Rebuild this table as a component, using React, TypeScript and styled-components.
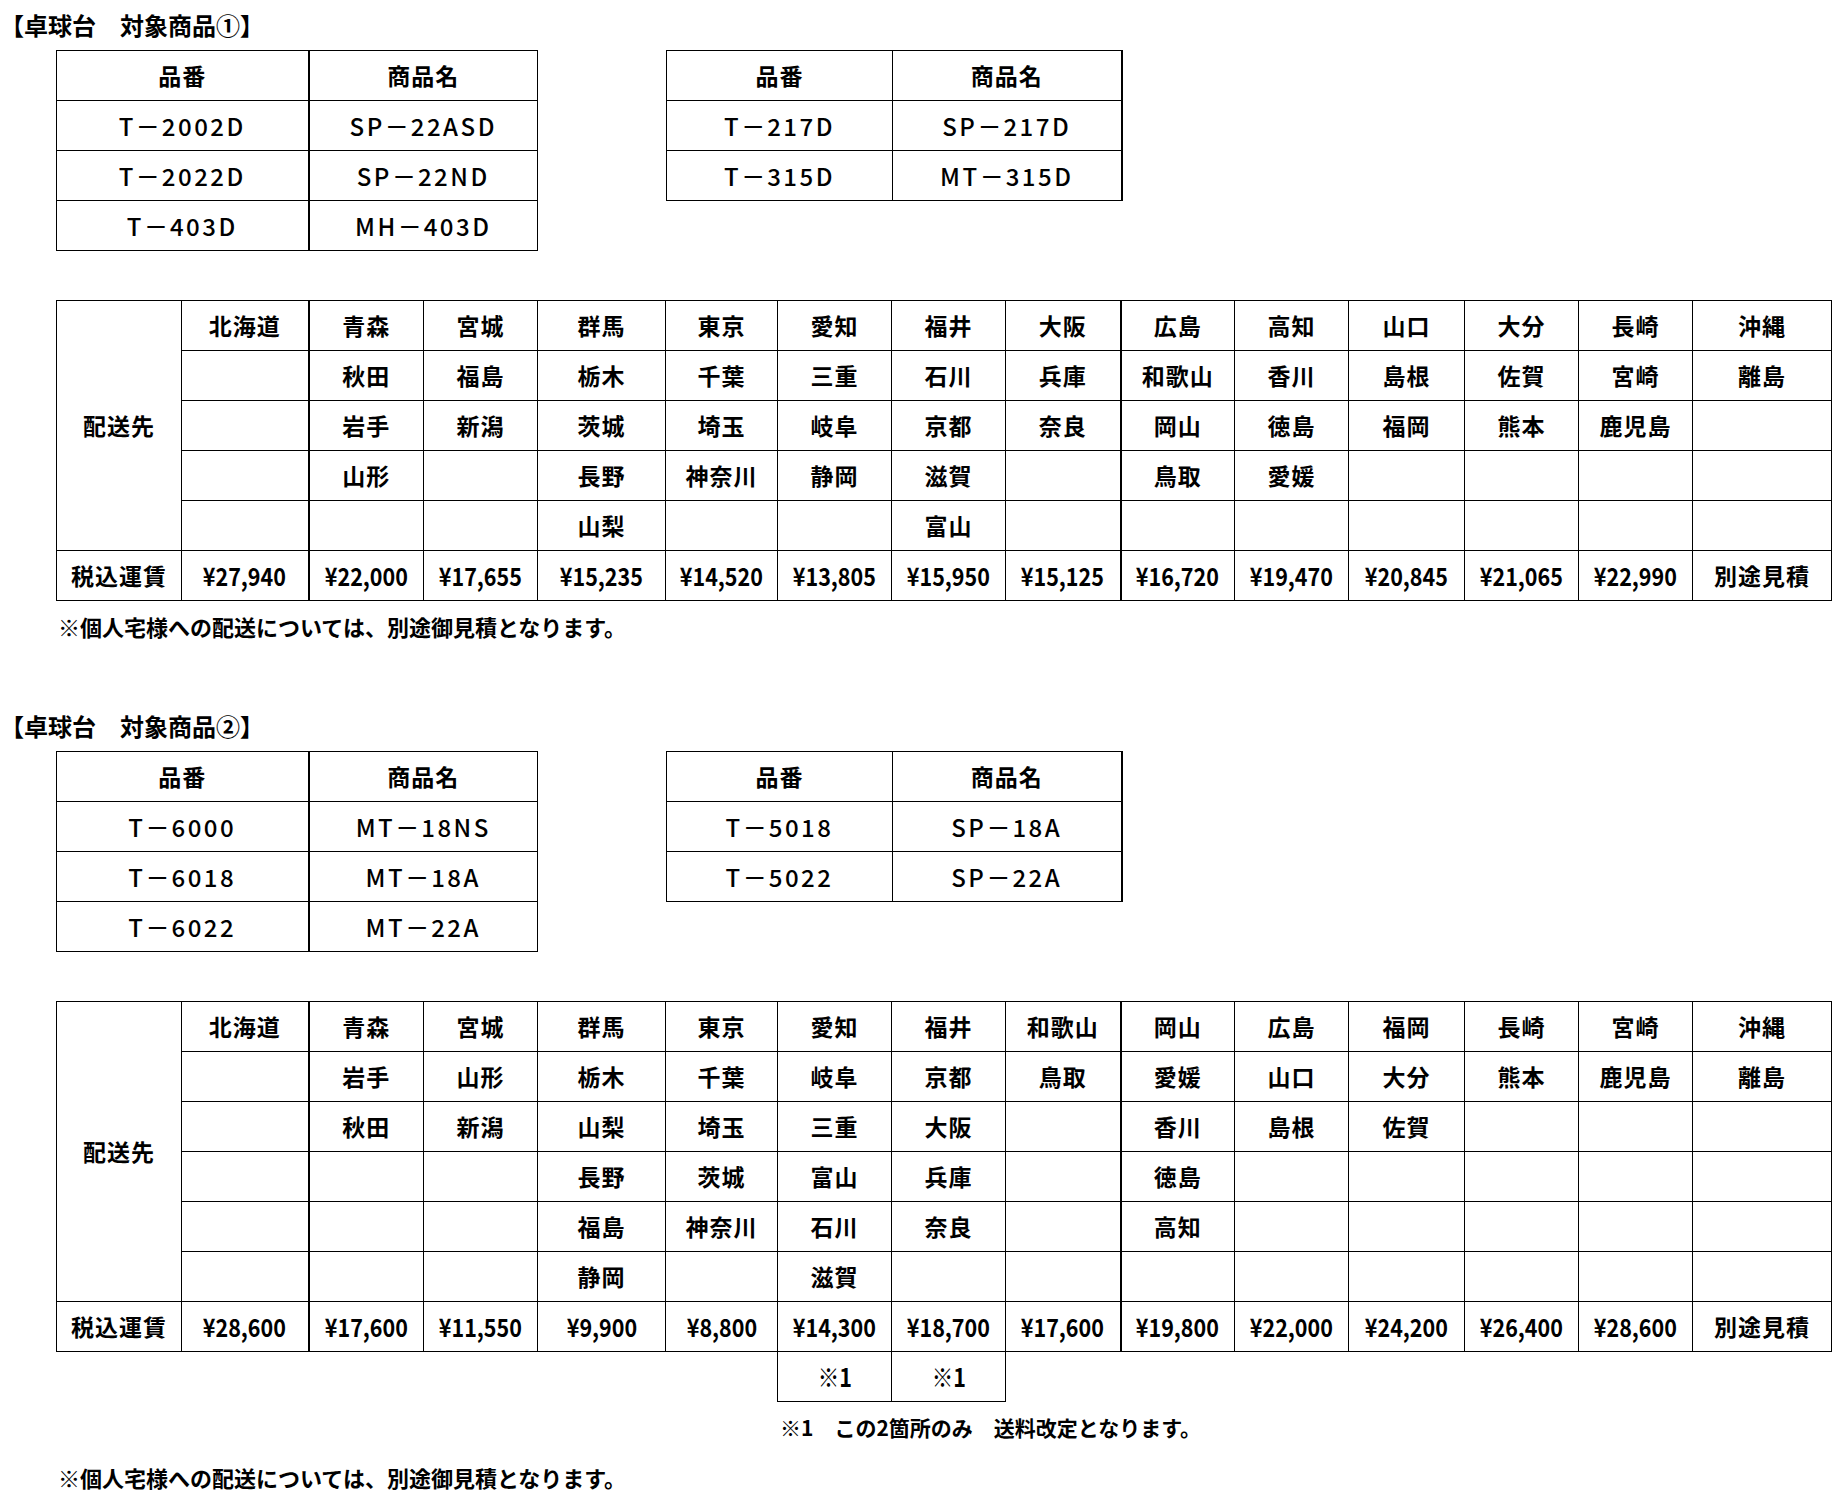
import React from 'react';
import styled, { createGlobalStyle } from 'styled-components';

const GlobalStyle = createGlobalStyle`
  html, body { margin: 0; padding: 0; background: #fff; }
  body {
    font-family: "Noto Sans CJK JP", "Noto Sans", sans-serif;
    color: #000;
  }
`;

const COLS = [125, 127, 115, 114, 128, 112, 114, 114, 115, 114, 114, 116, 114, 114, 139];
const THICK_AFTER = [1, 8];

type Section = {
  title: string;
  left: [string, string][];
  right: [string, string][];
  dest: string[][];
  fares: string[];
  footnoteCols?: number[];
  footnoteText?: string;
};

const SECTIONS: Section[] = [
  {
    title: '【卓球台　対象商品①】',
    left: [
      ['Ｔ－２００２Ｄ', 'ＳＰ－２２ＡＳＤ'],
      ['Ｔ－２０２２Ｄ', 'ＳＰ－２２ＮＤ'],
      ['Ｔ－４０３Ｄ', 'ＭＨ－４０３Ｄ'],
    ],
    right: [
      ['Ｔ－２１７Ｄ', 'ＳＰ－２１７Ｄ'],
      ['Ｔ－３１５Ｄ', 'ＭＴ－３１５Ｄ'],
    ],
    dest: [
      ['北海道'],
      ['青森', '秋田', '岩手', '山形'],
      ['宮城', '福島', '新潟'],
      ['群馬', '栃木', '茨城', '長野', '山梨'],
      ['東京', '千葉', '埼玉', '神奈川'],
      ['愛知', '三重', '岐阜', '静岡'],
      ['福井', '石川', '京都', '滋賀', '富山'],
      ['大阪', '兵庫', '奈良'],
      ['広島', '和歌山', '岡山', '鳥取'],
      ['高知', '香川', '徳島', '愛媛'],
      ['山口', '島根', '福岡'],
      ['大分', '佐賀', '熊本'],
      ['長崎', '宮崎', '鹿児島'],
      ['沖縄', '離島'],
    ],
    fares: ['¥27,940', '¥22,000', '¥17,655', '¥15,235', '¥14,520', '¥13,805', '¥15,950', '¥15,125', '¥16,720', '¥19,470', '¥20,845', '¥21,065', '¥22,990', '別途見積'],
  },
  {
    title: '【卓球台　対象商品②】',
    left: [
      ['Ｔ－６０００', 'ＭＴ－１８ＮＳ'],
      ['Ｔ－６０１８', 'ＭＴ－１８Ａ'],
      ['Ｔ－６０２２', 'ＭＴ－２２Ａ'],
    ],
    right: [
      ['Ｔ－５０１８', 'ＳＰ－１８Ａ'],
      ['Ｔ－５０２２', 'ＳＰ－２２Ａ'],
    ],
    dest: [
      ['北海道'],
      ['青森', '岩手', '秋田'],
      ['宮城', '山形', '新潟'],
      ['群馬', '栃木', '山梨', '長野', '福島', '静岡'],
      ['東京', '千葉', '埼玉', '茨城', '神奈川'],
      ['愛知', '岐阜', '三重', '富山', '石川', '滋賀'],
      ['福井', '京都', '大阪', '兵庫', '奈良'],
      ['和歌山', '鳥取'],
      ['岡山', '愛媛', '香川', '徳島', '高知'],
      ['広島', '山口', '島根'],
      ['福岡', '大分', '佐賀'],
      ['長崎', '熊本'],
      ['宮崎', '鹿児島'],
      ['沖縄', '離島'],
    ],
    fares: ['¥28,600', '¥17,600', '¥11,550', '¥9,900', '¥8,800', '¥14,300', '¥18,700', '¥17,600', '¥19,800', '¥22,000', '¥24,200', '¥26,400', '¥28,600', '別途見積'],
    footnoteCols: [6, 7],
    footnoteText: '※1　この2箇所のみ　送料改定となります。',
  },
];

const Page = styled.div`
  width: 1832px;
  display: flex;
  flex-direction: column;
`;

const Title = styled.h2`
  margin: 0;
  height: 50px;
  display: flex;
  align-items: center;
  font-size: 24px;
  font-weight: 700;
  line-height: 1;
  white-space: nowrap;
`;

const ProductRow = styled.div`
  display: flex;
  align-items: flex-start;
  gap: 128px;
  padding-left: 56px;
  height: 200px;
  margin-bottom: 50px;
`;

const Grid = styled.table`
  border-collapse: collapse;
  table-layout: fixed;
  border-spacing: 0;
`;

const Col = styled.col<{ $w: number }>`
  width: ${(p) => p.$w}px;
`;

const Row = styled.tr`
  height: 50px;
`;

type Kind = 'head' | 'code' | 'pref' | 'fare' | 'mark';

const Cell = styled.td<{ $thick?: boolean; $kind?: Kind; $blank?: boolean }>`
  border: 1px solid #000;
  ${(p) => (p.$thick ? 'border-right: 2px solid #000;' : '')}
  ${(p) => (p.$blank ? 'border-left: none; border-right: none; border-bottom: none;' : '')}
  padding: 0;
  height: 50px;
  box-sizing: border-box;
  text-align: center;
  vertical-align: middle;
  white-space: nowrap;
  line-height: 1;
  color: #000;
  font-family: "Noto Sans CJK JP", sans-serif;
  font-size: ${(p) => (p.$kind === 'code' ? '24px' : '23px')};
  letter-spacing: ${(p) => (p.$kind === 'code' ? '2.5px' : p.$kind === 'pref' || p.$kind === 'head' ? '1px' : '0')};
  ${(p) => (p.$kind === 'code' ? 'font-feature-settings: "pwid" 1;' : '')}
  font-weight: ${(p) => (p.$kind === 'code' ? 500 : 700)};
  overflow: hidden;
`;

const Dash = styled.span`
  font-feature-settings: normal;
  letter-spacing: 2px;
`;

const Condensed = styled.span<{ $size: number }>`
  display: inline-block;
  font-size: ${(p) => p.$size}px;
  transform: scaleX(0.86);
  transform-origin: center;
  letter-spacing: 0;
`;

const BigTableWrap = styled.div`
  padding-left: 56px;
`;

const Note = styled.p<{ $indent: number; $size: number }>`
  margin: 0;
  height: 50px;
  display: flex;
  align-items: center;
  padding-left: ${(p) => p.$indent}px;
  font-size: ${(p) => p.$size}px;
  font-weight: 700;
  line-height: 1;
  white-space: nowrap;
`;

const Spacer = styled.div`
  height: 50px;
`;

function CodeText({ text }: { text: string }) {
  const [a, b] = text.split('－');
  return (
    <>
      {a}
      <Dash>－</Dash>
      {b}
    </>
  );
}

function ProductTable({
  widths,
  rows,
  thickInner,
  thickOuter,
}: {
  widths: [number, number];
  rows: [string, string][];
  thickInner?: boolean;
  thickOuter?: boolean;
}) {
  return (
    <Grid>
      <colgroup>
        <Col $w={widths[0]} />
        <Col $w={widths[1]} />
      </colgroup>
      <tbody>
        <Row>
          <Cell $kind="head" $thick={thickInner}>品番</Cell>
          <Cell $kind="head" $thick={thickOuter}>商品名</Cell>
        </Row>
        {rows.map(([a, b]) => (
          <Row key={a}>
            <Cell $kind="code" $thick={thickInner}>
              <CodeText text={a} />
            </Cell>
            <Cell $kind="code" $thick={thickOuter}>
              <CodeText text={b} />
            </Cell>
          </Row>
        ))}
      </tbody>
    </Grid>
  );
}

function RateTable({ s }: { s: Section }) {
  const nRows = Math.max(...s.dest.map((d) => d.length));
  const rowCount = s.footnoteCols ? 6 : 5;
  const rows = Array.from({ length: Math.max(nRows, rowCount) }, (_, r) => s.dest.map((c) => c[r] ?? ''));
  return (
    <Grid>
      <colgroup>
        {COLS.map((w, i) => (
          <Col key={i} $w={w} />
        ))}
      </colgroup>
      <tbody>
        {rows.map((r, ri) => (
          <Row key={ri}>
            {ri === 0 && (
              <Cell $kind="pref" rowSpan={rows.length}>
                配送先
              </Cell>
            )}
            {r.map((v, ci) => (
              <Cell key={ci} $kind="pref" $thick={THICK_AFTER.includes(ci + 1)}>
                {v}
              </Cell>
            ))}
          </Row>
        ))}
        <Row>
          <Cell $kind="pref">税込運賃</Cell>
          {s.fares.map((f, ci) => (
            <Cell key={ci} $kind={f.startsWith('¥') ? 'fare' : 'pref'} $thick={THICK_AFTER.includes(ci + 1)}>
              {f.startsWith('¥') ? <Condensed $size={25}>{f}</Condensed> : f}
            </Cell>
          ))}
        </Row>
        {s.footnoteCols && (
          <Row>
            {COLS.map((_, ci) =>
              s.footnoteCols!.includes(ci) ? (
                <Cell key={ci} $kind="mark">
                  <Condensed $size={25}>※1</Condensed>
                </Cell>
              ) : (
                <Cell key={ci} $blank />
              )
            )}
          </Row>
        )}
      </tbody>
    </Grid>
  );
}

export default function App() {
  return (
    <Page>
      <GlobalStyle />
      {SECTIONS.map((s, si) => (
        <React.Fragment key={si}>
          {si > 0 && <Spacer />}
          <Title>{s.title}</Title>
          <ProductRow>
            <ProductTable widths={[252, 229]} rows={s.left} thickInner />
            <ProductTable widths={[226, 229]} rows={s.right} thickOuter />
          </ProductRow>
          <BigTableWrap>
            <RateTable s={s} />
          </BigTableWrap>
          {s.footnoteText && (
            <Note $indent={780} $size={21}>
              {s.footnoteText}
            </Note>
          )}
          <Note $indent={58} $size={22}>
            ※個人宅様への配送については、別途御見積となります。
          </Note>
        </React.Fragment>
      ))}
    </Page>
  );
}
